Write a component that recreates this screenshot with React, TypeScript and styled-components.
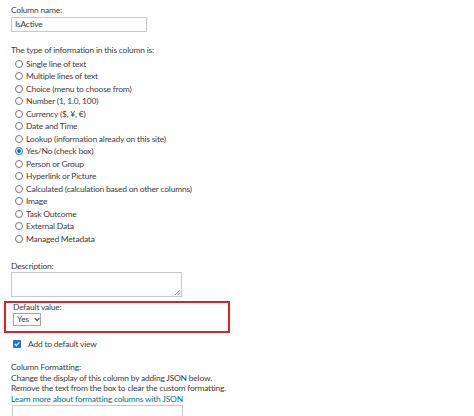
import styled, { createGlobalStyle } from "styled-components";

const GlobalStyle = createGlobalStyle`
  html, body {
    margin: 0;
    padding: 0;
    background: #ffffff;
    overflow: hidden;
  }
  body {
    color: #404040;
    font-family: Lato, "Liberation Sans", sans-serif;
    font-size: 8.45px;
    letter-spacing: -0.2px;
  }
`;

const Page = styled.div`
  display: flex;
  flex-direction: column;
  padding: 5px 0 0 11px;
  width: 474px;
  box-sizing: border-box;

  & > * {
    flex-shrink: 0;
  }
`;

const Label = styled.div<{ $top?: number; $lh?: number }>`
  line-height: ${({ $lh }) => $lh ?? 11}px;
  margin-top: ${({ $top }) => $top ?? 0}px;
`;

const TextInput = styled.div`
  border: 1px solid #c8c8c8;
  box-sizing: border-box;
  height: 15px;
  line-height: 13px;
  margin-top: 1px;
  padding-left: 3px;
  width: 136px;
`;

const RadioList = styled.ul`
  list-style: none;
  margin: 2px 0 0;
  padding: 0 0 0 4px;
`;

const RadioRow = styled.li`
  align-items: center;
  display: flex;
  gap: 3px;
  height: 12.5px;
`;

const RadioDot = styled.span<{ $checked?: boolean }>`
  border: 1px solid ${({ $checked }) => ($checked ? "#0078d4" : "#777777")};
  border-radius: 50%;
  box-sizing: border-box;
  display: inline-block;
  flex: 0 0 auto;
  height: 8px;
  position: relative;
  width: 8px;

  &::after {
    background: #0a6fe0;
    border-radius: 50%;
    content: "";
    display: ${({ $checked }) => ($checked ? "block" : "none")};
    inset: 1px;
    position: absolute;
  }
`;

const TextArea = styled.div<{ $height: number; $top?: number; $left?: number }>`
  border: 1px solid #c8c8c8;
  box-sizing: border-box;
  height: ${({ $height }) => $height}px;
  margin-left: ${({ $left }) => $left ?? 0}px;
  margin-top: ${({ $top }) => $top ?? 0}px;
  position: relative;
  width: 171px;
`;

const ResizeGrip = styled.svg`
  bottom: 1px;
  position: absolute;
  right: 1px;
`;

const Highlight = styled.div`
  border: 2.5px solid #d9232d;
  box-sizing: border-box;
  height: 32px;
  margin: 4px 0 0 -7px;
  padding: 0 0 0 7px;
  width: 226px;
`;

const Select = styled.div`
  align-items: center;
  border: 1px solid #a6a6a6;
  box-sizing: border-box;
  display: flex;
  gap: 5px;
  height: 13px;
  margin-top: 2px;
  padding-left: 3px;
  width: 28px;
`;

const CheckRow = styled.div`
  align-items: center;
  display: flex;
  gap: 7px;
  height: 11px;
  margin: 6px 0 0 2px;
`;

const CheckBox = styled.span`
  align-items: center;
  background: #1a73e8;
  border-radius: 1px;
  display: inline-flex;
  height: 8px;
  justify-content: center;
  width: 8px;
`;

const Paragraph = styled.div`
  line-height: 10.6px;
`;

const Link = styled.a`
  color: #03787c;
  text-decoration: none;
`;

const types = [
  "Single line of text",
  "Multiple lines of text",
  "Choice (menu to choose from)",
  "Number (1, 1.0, 100)",
  "Currency ($, ¥, €)",
  "Date and Time",
  "Lookup (information already on this site)",
  "Yes/No (check box)",
  "Person or Group",
  "Hyperlink or Picture",
  "Calculated (calculation based on other columns)",
  "Image",
  "Task Outcome",
  "External Data",
  "Managed Metadata",
];

export default function App() {
  return (
    <>
      <GlobalStyle />
      <Page>
        <Label>Column name:</Label>
        <TextInput>IsActive</TextInput>
        <Label $top={12.5}>The type of information in this column is:</Label>
        <RadioList>
          {types.map((type) => (
            <RadioRow key={type}>
              <RadioDot $checked={type === "Yes/No (check box)"} />
              <span>{type}</span>
            </RadioRow>
          ))}
        </RadioList>
        <Label $top={15.5}>Description:</Label>
        <TextArea $height={25}>
          <ResizeGrip width="6" height="6" viewBox="0 0 6 6">
            <path d="M1 6 L6 1 M3.5 6 L6 3.5" stroke="#777" strokeWidth="0.8" />
          </ResizeGrip>
        </TextArea>
        <Highlight>
          <Label $lh={8}>Default value:</Label>
          <Select>
            <span>Yes</span>
            <svg width="7" height="5" viewBox="0 0 7 5">
              <path d="M0.8 1 L3.5 3.7 L6.2 1" fill="none" stroke="#333" strokeWidth="1.3" />
            </svg>
          </Select>
        </Highlight>
        <CheckRow>
          <CheckBox>
            <svg width="6" height="6" viewBox="0 0 6 6">
              <path d="M0.8 3 L2.4 4.6 L5.2 1.4" fill="none" stroke="#fff" strokeWidth="1.2" />
            </svg>
          </CheckBox>
          <span>Add to default view</span>
        </CheckRow>
        <Label $top={12}>Column Formatting:</Label>
        <Paragraph>Change the display of this column by adding JSON below.</Paragraph>
        <Paragraph>Remove the text from the box to clear the custom formatting.</Paragraph>
        <Paragraph>
          <Link href="#">Learn more about formatting columns with JSON</Link>
        </Paragraph>
        <TextArea $height={30} $top={1} $left={1} />
      </Page>
    </>
  );
}
